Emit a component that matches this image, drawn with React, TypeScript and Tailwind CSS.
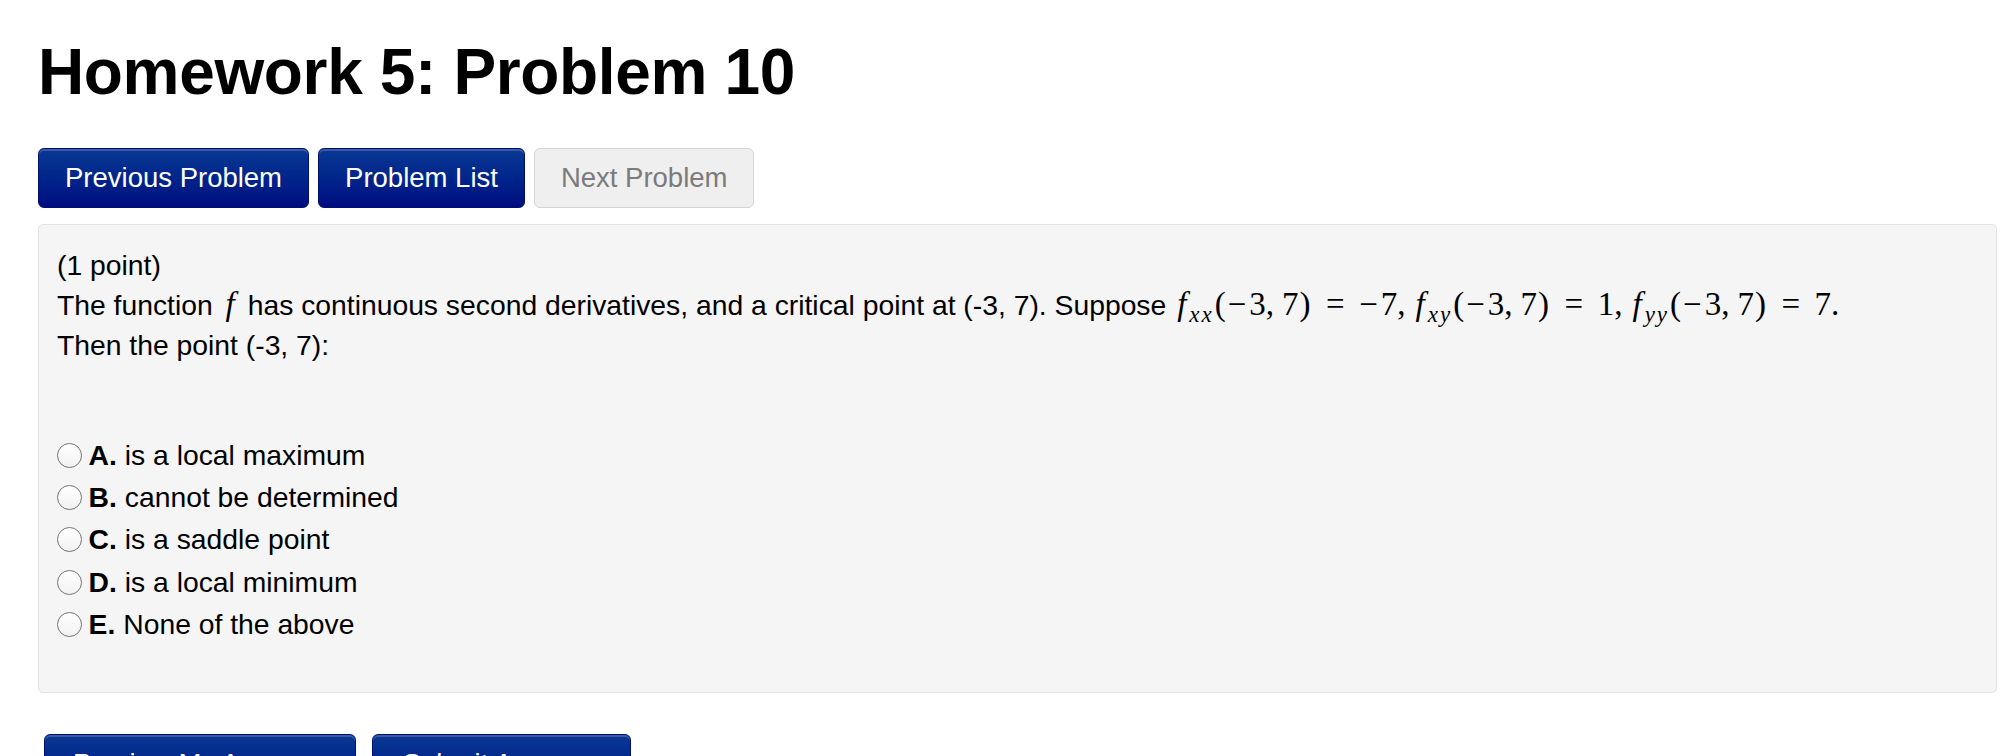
import type { ReactNode } from "react";

const navButtons = [
  { label: "Previous Problem", disabled: false },
  { label: "Problem List", disabled: false },
  { label: "Next Problem", disabled: true },
];

const choices = [
  { key: "A", text: "is a local maximum" },
  { key: "B", text: "cannot be determined" },
  { key: "C", text: "is a saddle point" },
  { key: "D", text: "is a local minimum" },
  { key: "E", text: "None of the above" },
];

function PrimaryButton({
  children,
  className = "px-[26px]",
}: {
  children: ReactNode;
  className?: string;
}) {
  return (
    <button
      type="button"
      className={`flex h-[60px] items-center rounded-[6px] border border-[#00106e] bg-gradient-to-b from-[#0b3894] to-[#000a80] text-[27.5px] leading-[30px] text-white shadow-[inset_0_2px_0_rgba(255,255,255,0.18)] ${className}`}
    >
      {children}
    </button>
  );
}

function DisabledButton({ children }: { children: ReactNode }) {
  return (
    <button
      type="button"
      disabled
      className="flex h-[60px] items-center rounded-[6px] border border-[#d4d4d4] bg-[#efefef] px-[26px] text-[27.5px] leading-[30px] text-[#7b7b7b]"
    >
      {children}
    </button>
  );
}

// math bits, set in a Times-like face with extra spacing to mimic MathJax
function Fn({ sub }: { sub?: string }) {
  return (
    <span className="inline-block">
      <span className="italic pr-[3px]">f</span>
      {sub && (
        <span className="relative top-[7px] text-[23px] italic tracking-[2px]">
          {sub}
        </span>
      )}
    </span>
  );
}

function Point() {
  return (
    <span>
      <span className="ml-[1px] mr-[2px]">(</span>
      <span className="mr-[3px]">−</span>3,
      <span className="ml-[8px]">7</span>
      <span className="mx-[1px]">)</span>
    </span>
  );
}

function Eq() {
  return <span className="mx-[14.5px]">=</span>;
}

const math =
  "font-['Liberation_Serif','Times_New_Roman',serif] text-[33px] leading-[30px]";

export default function App() {
  return (
    <div className="h-[756px] overflow-hidden bg-white pl-[38px] pr-[13px] font-['Liberation_Sans',Arial,Helvetica,sans-serif] text-black">
      <h1 className="pt-[40px] text-[64px] font-bold leading-[64px] tracking-[-0.35px]">
        Homework 5: Problem 10
      </h1>

      <div className="mt-[44px] flex gap-[9px]">
        {navButtons.map((b) =>
          b.disabled ? (
            <DisabledButton key={b.label}>{b.label}</DisabledButton>
          ) : (
            <PrimaryButton key={b.label}>{b.label}</PrimaryButton>
          ),
        )}
      </div>

      <div className="mt-[16px] rounded-[5px] border border-[#e2e2e2] bg-[#f5f5f5] pb-[47px] pl-[18px] pt-[20px] text-[28.3px] leading-[40px]">
        <p>(1 point)</p>
        <p>
          The function{" "}
          <span className={math}>
            <span className="mx-[5px] italic">f</span>
          </span>{" "}
          has continuous second derivatives, and a critical point at (-3, 7).
          Suppose{" "}
          <span className={`ml-[3px] ${math}`}>
            <Fn sub="xx" />
            <Point />
            <Eq />
            <span className="mr-[3px]">−</span>7,
            <span className="ml-[10px]" />
            <Fn sub="xy" />
            <Point />
            <Eq />
            1,
            <span className="ml-[10px]" />
            <Fn sub="yy" />
            <Point />
            <Eq />
            7.
          </span>
        </p>
        <p>Then the point (-3, 7):</p>

        <div className="mt-[68.8px]">
          {choices.map((c) => (
            <label key={c.key} className="flex h-[42.25px] items-start">
              <span className="mt-[9px] h-[25px] w-[25px] shrink-0 rounded-full border-[1.5px] border-[#747474] bg-gradient-to-b from-white to-[#f2f2f2]" />
              <span className="ml-[6.6px] leading-[42px]">
                <b>{c.key}.</b> {c.text}
              </span>
            </label>
          ))}
        </div>
      </div>

      <div className="ml-[6px] mt-[41px] flex gap-[16px]">
        <PrimaryButton className="px-[28px]">Preview My Answers</PrimaryButton>
        <PrimaryButton className="px-[30px]">Submit Answers</PrimaryButton>
      </div>
    </div>
  );
}
